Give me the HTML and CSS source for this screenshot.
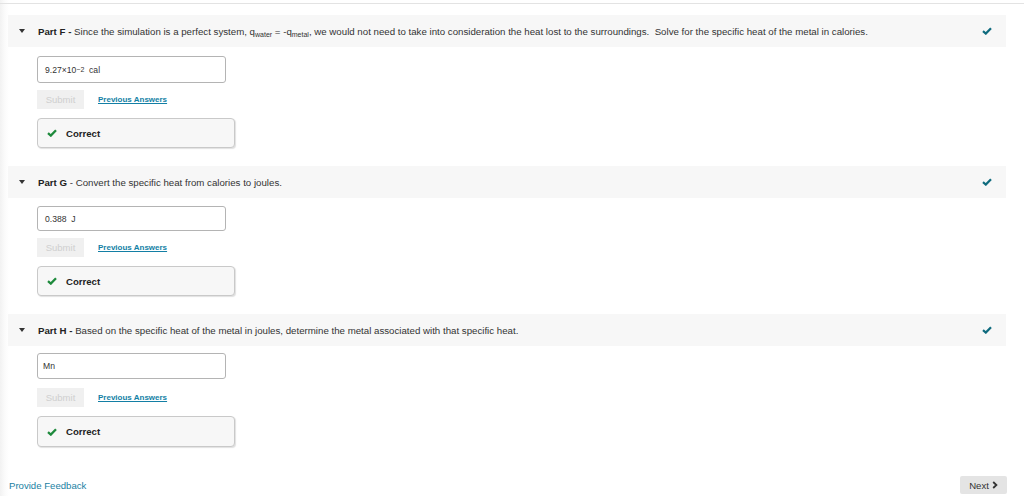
FILE: index.html
```html
<!DOCTYPE html>
<html lang="en">
<head>
<meta charset="utf-8">
<title>Parts</title>
<link rel="stylesheet" href="styles.css">
</head>
<body>
<div class="topline"></div>
<main class="parts">
  <section class="part">
    <div class="part-head">
      <span class="toggle"><span class="tri"></span></span>
      <p class="title"><b>Part F - </b>Since the simulation is a perfect system, q<sub>water</sub> = -q<sub>metal</sub>, we would not need to take into consideration the heat lost to the surroundings.&nbsp; Solve for the specific heat of the metal in calories.</p>
      <svg class="status" width="10" height="8" viewBox="0 0 10 8"><path d="M1 4.2 L3.8 6.6 L9 1.2" fill="none" stroke="#0f6b7e" stroke-width="2.2"/></svg>
    </div>
    <div class="part-body">
      <div class="answer answer--tall">9.27×10<sup>−2</sup>&nbsp; cal</div>
      <div class="actions"><span class="submit">Submit</span><a class="prev" href="#">Previous Answers</a></div>
      <div class="correct"><svg width="10" height="8" viewBox="0 0 10 8"><path d="M1 4.2 L3.8 6.6 L9 1.2" fill="none" stroke="#1e8a3c" stroke-width="2.3"/></svg><span>Correct</span></div>
    </div>
  </section>
  <section class="part">
    <div class="part-head">
      <span class="toggle"><span class="tri"></span></span>
      <p class="title"><b>Part G</b> - Convert the specific heat from calories to joules.</p>
      <svg class="status" width="10" height="8" viewBox="0 0 10 8"><path d="M1 4.2 L3.8 6.6 L9 1.2" fill="none" stroke="#0f6b7e" stroke-width="2.2"/></svg>
    </div>
    <div class="part-body part-body--g">
      <div class="answer">0.388&nbsp; J</div>
      <div class="actions"><span class="submit">Submit</span><a class="prev" href="#">Previous Answers</a></div>
      <div class="correct"><svg width="10" height="8" viewBox="0 0 10 8"><path d="M1 4.2 L3.8 6.6 L9 1.2" fill="none" stroke="#1e8a3c" stroke-width="2.3"/></svg><span>Correct</span></div>
    </div>
  </section>
  <section class="part">
    <div class="part-head">
      <span class="toggle"><span class="tri"></span></span>
      <p class="title"><b>Part H - </b>Based on the specific heat of the metal in joules, determine the metal associated with that specific heat.</p>
      <svg class="status" width="10" height="8" viewBox="0 0 10 8"><path d="M1 4.2 L3.8 6.6 L9 1.2" fill="none" stroke="#0f6b7e" stroke-width="2.2"/></svg>
    </div>
    <div class="part-body part-body--last">
      <div class="answer answer--mid">Mn</div>
      <div class="actions"><span class="submit">Submit</span><a class="prev" href="#">Previous Answers</a></div>
      <div class="correct"><svg width="10" height="8" viewBox="0 0 10 8"><path d="M1 4.2 L3.8 6.6 L9 1.2" fill="none" stroke="#1e8a3c" stroke-width="2.3"/></svg><span>Correct</span></div>
    </div>
  </section>
</main>
<footer class="footer">
  <a class="feedback" href="#">Provide Feedback</a>
  <span class="next">Next <svg width="6" height="8" viewBox="0 0 6 8"><path d="M1.2 1 L4.4 4 L1.2 7" fill="none" stroke="#333" stroke-width="1.8"/></svg></span>
</footer>
</body>
</html>
```
FILE: styles.css
```css
html, body {
  margin: 0;
  padding: 0;
}
body {
  width: 1024px;
  height: 496px;
  overflow: hidden;
  font-family: "Liberation Sans", Arial, Helvetica, sans-serif;
  color: #333;
  background: linear-gradient(to right, #f2f2f2 0, #fbfbfb 5px, #ffffff 9px);
}
.topline {
  margin-top: 3px;
  height: 1px;
  background: #e3e3e3;
}
.parts {
  padding: 11px 18px 0 8px;
}
.part-head {
  height: 32px;
  background: #f7f7f7;
  display: flex;
  align-items: center;
}
.toggle {
  width: 30px;
  display: flex;
  padding-left: 11px;
  box-sizing: border-box;
}
.tri {
  width: 0;
  height: 0;
  border-left: 3px solid transparent;
  border-right: 3px solid transparent;
  border-top: 4px solid #333;
}
.title {
  flex: 1;
  margin: 0;
  font-size: 9.7px;
  color: #333;
  white-space: nowrap;
}
.title b {
  color: #222;
}
.title sub {
  font-size: 7px;
  vertical-align: -2px;
  line-height: 0;
}
.status {
  margin-right: 14px;
}
.part-body {
  padding: 9px 0 18px 29px;
}
.part-body--g {
  padding-top: 8px;
}
.part-body--last {
  padding-top: 7px;
  padding-bottom: 0;
}
.answer {
  width: 189px;
  height: 25px;
  box-sizing: border-box;
  border: 1px solid #b4b4b4;
  border-radius: 3px;
  background: #fff;
  display: flex;
  align-items: center;
  padding-left: 7px;
  font-size: 8.6px;
  color: #333;
}
.answer--tall {
  height: 27px;
}
.answer--mid {
  height: 26px;
  padding-left: 5px;
}
.answer sup {
  font-size: 7px;
  line-height: 0;
  vertical-align: 4px;
}
.actions {
  margin-top: 7px;
  height: 19px;
  display: flex;
  align-items: center;
  gap: 14px;
}
.part-body--last .actions {
  margin-top: 9px;
}
.submit {
  width: 47px;
  height: 19px;
  background: #f0f0f0;
  color: #cfcfcf;
  font-size: 9.5px;
  display: flex;
  align-items: center;
  justify-content: center;
}
.prev {
  font-size: 8px;
  font-weight: bold;
  color: #137fa5;
  text-decoration: underline;
}
.correct {
  margin-top: 9px;
  width: 198px;
  height: 30px;
  box-sizing: border-box;
  border: 1px solid #c9c9c9;
  border-radius: 4px;
  background: #f7f7f7;
  box-shadow: 1px 1px 1px rgba(0, 0, 0, 0.12);
  display: flex;
  align-items: center;
  gap: 9px;
  padding-left: 9px;
  font-size: 9.6px;
  font-weight: bold;
  color: #222;
}
.part-body--last .correct {
  height: 31px;
}
.footer {
  margin-top: 29px;
  padding: 0 17px 0 9px;
  display: flex;
  justify-content: space-between;
  align-items: center;
}
.feedback {
  font-size: 9.6px;
  color: #1a7fa3;
  text-decoration: none;
}
.next {
  width: 47px;
  height: 18px;
  background: #e4e4e4;
  border-radius: 2px;
  display: flex;
  align-items: center;
  justify-content: center;
  gap: 3px;
  font-size: 9.6px;
  color: #333;
}
```
